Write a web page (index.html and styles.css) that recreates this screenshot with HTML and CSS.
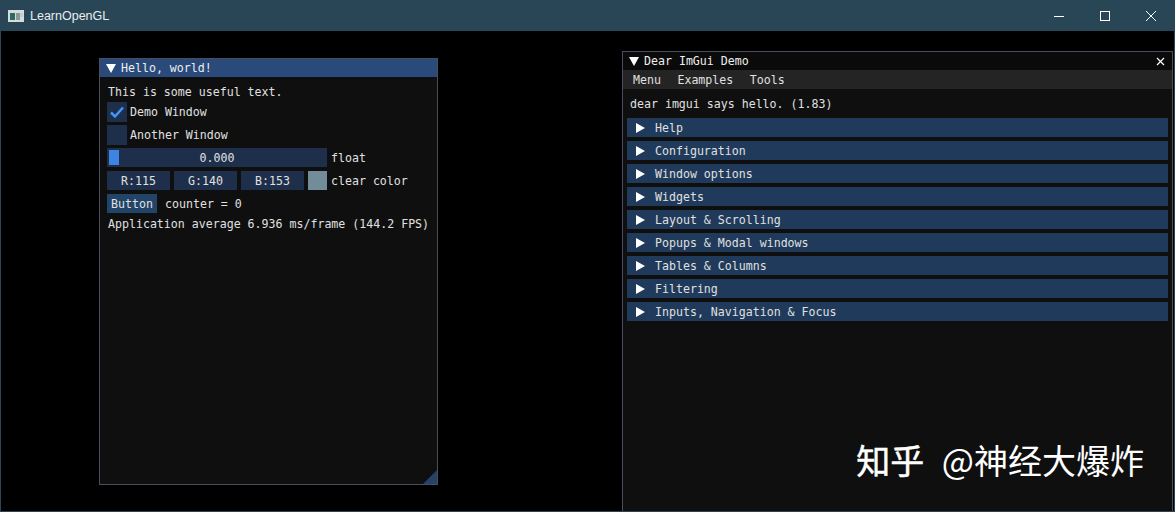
FILE: index.html
```html
<!DOCTYPE html>
<html lang="en">
<head>
<meta charset="utf-8">
<title>LearnOpenGL</title>
<link rel="stylesheet" href="styles.css">
</head>
<body>
<div class="app">
  <header class="titlebar">
    <svg class="app-icon" width="16" height="12" viewBox="0 0 16 12"><rect width="16" height="12" fill="#d4dcdc"/><rect x="2" y="3" width="5" height="7" fill="#2c6a62"/><rect x="8" y="3" width="4" height="7" fill="#8a9a9a"/><rect x="12" y="3" width="3" height="4" fill="#c4cccc"/></svg>
    <span class="app-title">LearnOpenGL</span>
    <div class="caption">
      <svg class="cap-btn" width="46" height="30" viewBox="0 0 46 30"><path d="M18 15.500h10" stroke="#fff" fill="none"/></svg>
      <svg class="cap-btn" width="46" height="30" viewBox="0 0 46 30"><rect x="18.500" y="10.500" width="9" height="9" stroke="#fff" fill="none"/></svg>
      <svg class="cap-btn" width="46" height="30" viewBox="0 0 46 30"><path d="M18 10l10 10M28 10l-10 10" stroke="#fff" fill="none"/></svg>
    </div>
  </header>
  <main class="viewport">
    <section class="win win-hello">
      <div class="win-title active">
        <svg class="arrow" width="10" height="9" viewBox="0 0 10 9"><path d="M0 0h10L5 9z" fill="#fff"/></svg>
        <span>Hello, world!</span>
      </div>
      <div class="win-body">
        <div class="row text-row">This is some useful text.</div>
        <div class="row check-row">
          <span class="check"><svg width="20" height="20" viewBox="0 0 20 20"><path d="M4 10.500l4 4 8-9" stroke="#4296fa" stroke-width="2.500" fill="none"/></svg></span>
          <span>Demo Window</span>
        </div>
        <div class="row check-row">
          <span class="check"></span>
          <span>Another Window</span>
        </div>
        <div class="row">
          <div class="slider"><span class="grab"></span>0.000</div>
          <span>float</span>
        </div>
        <div class="row">
          <div class="chan">R:115</div>
          <div class="chan">G:140</div>
          <div class="chan">B:153</div>
          <span class="swatch"></span>
          <span>clear color</span>
        </div>
        <div class="row">
          <div class="button">Button</div>
          <span class="counter">counter = 0</span>
        </div>
        <div class="row text-row">Application average 6.936 ms/frame (144.2 FPS)</div>
      </div>
      <span class="grip"></span>
    </section>

    <section class="win win-demo">
      <div class="win-title">
        <svg class="arrow" width="10" height="9" viewBox="0 0 10 9"><path d="M0 0h10L5 9z" fill="#fff"/></svg>
        <span>Dear ImGui Demo</span>
        <svg class="close" width="9" height="9" viewBox="0 0 9 9"><path d="M1 1l7 7M8 1l-7 7" stroke="#fff" stroke-width="1.200" fill="none"/></svg>
      </div>
      <nav class="menubar"><span>Menu</span><span>Examples</span><span>Tools</span></nav>
      <div class="demo-body">
        <div class="hello">dear imgui says hello. (1.83)</div>
        <ul class="headers">
          <li><i></i>Help</li>
          <li><i></i>Configuration</li>
          <li><i></i>Window options</li>
          <li><i></i>Widgets</li>
          <li><i></i>Layout &amp; Scrolling</li>
          <li><i></i>Popups &amp; Modal windows</li>
          <li><i></i>Tables &amp; Columns</li>
          <li><i></i>Filtering</li>
          <li><i></i>Inputs, Navigation &amp; Focus</li>
        </ul>
      </div>
      <div class="watermark"><span class="wm-strong">知乎</span> @神经大爆炸</div>
    </section>
  </main>
</div>
</body>
</html>
```
FILE: styles.css
```css
* { box-sizing: border-box; }
html, body { margin: 0; height: 100%; background: #000; overflow: hidden; }
body { font-family: "DejaVu Sans Mono", "Liberation Mono", monospace; font-size: 11.600px; color: #e0e0e0; }

.app { width: 1175px; height: 512px; display: flex; flex-direction: column; border: 1px solid #2a4656; }

.titlebar { height: 31px; flex: none; display: flex; align-items: center; background: #284656; padding-left: 8px; margin: -1px -1px 0; }
.app-icon { flex: none; }
.app-title { margin-left: 6px; font-family: "Liberation Sans", Arial, sans-serif; font-size: 12.500px; color: #e8eef0; }
.caption { margin-left: auto; margin-right: 1px; display: flex; }
.cap-btn { display: block; }

.viewport { position: relative; flex: 1; background: #000; overflow: hidden; }

.win { position: absolute; background: #0f0f0f; border: 1px solid #47505a; }
.win-hello { left: 98px; top: 27px; width: 339px; height: 427px; }
.win-demo { left: 621px; top: 20px; width: 551px; height: 470px; }

.win-title { height: 18px; display: flex; align-items: center; gap: 5px; padding-left: 6px; background: #0a0a0a; color: #eee; }
.win-title.active { background: #294a7a; }
.arrow { flex: none; }
.close { margin-left: auto; margin-right: 7px; }

.win-body { padding: 8px 8px 0 7px; display: flex; flex-direction: column; }
.row { height: 19px; margin-bottom: 4px; display: flex; align-items: center; gap: 4px; white-space: nowrap; }
.check-row { height: 20px; gap: 3px; margin-bottom: 3px; }
.text-row { height: 14px; margin-bottom: 3px; padding-left: 1px; }

.check { width: 20px; height: 20px; flex: none; background: #1d2f4b; display: block; }
.check svg { display: block; }
.slider { position: relative; width: 220px; height: 19px; background: #1d2f4b; display: flex; align-items: center; justify-content: center; }
.grab { position: absolute; left: 2px; top: 2px; width: 10px; height: 15px; background: #3d85e0; }
.chan { width: 63px; height: 19px; background: #1d2f4b; display: flex; align-items: center; justify-content: center; }
.swatch { width: 19px; height: 19px; flex: none; background: #738c99; }
.button { width: 50px; height: 19px; background: #224469; display: flex; align-items: center; justify-content: center; }
.counter { margin-left: 4px; }

.menubar { height: 19px; display: flex; gap: 16.500px; align-items: center; padding-left: 10px; background: #242424; }

.demo-body { padding: 0 4px; }
.hello { height: 29px; display: flex; align-items: center; padding-left: 3px; }
.headers { list-style: none; margin: 0; padding: 0; display: flex; flex-direction: column; gap: 4px; }
.headers li { height: 19px; display: flex; align-items: center; background: #1f3a5a; padding-left: 28px; position: relative; }
.headers i { position: absolute; left: 9px; top: 5px; width: 0; height: 0; border-left: 9px solid #fff; border-top: 5px solid transparent; border-bottom: 5px solid transparent; }

.watermark { position: absolute; right: 28px; bottom: 40px; font-family: "Noto Sans CJK SC", sans-serif; font-size: 34px; line-height: 40px; word-spacing: 10px; color: #fff; white-space: nowrap; }
.wm-strong { -webkit-text-stroke: 0.500px #fff; }

.grip { position: absolute; right: 0; bottom: 0; width: 0; height: 0; border-left: 14px solid transparent; border-bottom: 14px solid #274268; }
```
